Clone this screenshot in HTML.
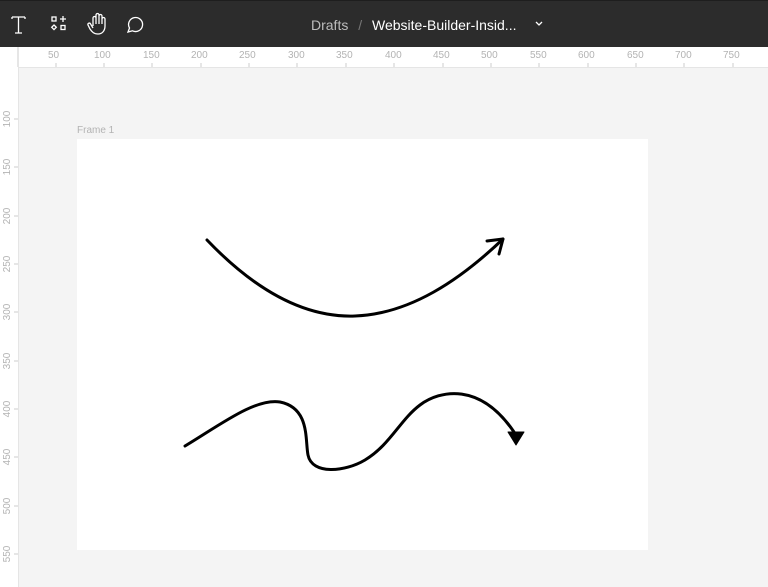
<!DOCTYPE html><html><head><style>
body{margin:0;width:768px;height:587px;overflow:hidden;background:#f4f4f4;font-family:"Liberation Sans",sans-serif;position:relative}
.top{position:absolute;left:0;top:0;width:768px;height:47px;background:#2c2c2c;border-top:1px solid #1e1e1e;box-sizing:border-box}
.title{position:absolute;top:16px;left:311px;font-size:14px;color:#fff;white-space:nowrap}
.rul{position:absolute;left:0;top:47px;width:768px;height:20px;background:#fff;border-bottom:1px solid #e5e5e5}
.lr{position:absolute;left:0;top:67px;width:18px;height:520px;background:#fff;border-right:1px solid #e5e5e5}
.t{position:absolute;font-size:10px;color:#b3b3b3}
.frame{position:absolute;left:77px;top:139px;width:571px;height:411px;background:#fff}
</style></head><body>
<div class="top">
<svg width="768" height="47" style="position:absolute;left:0;top:-1px" fill="none" stroke="#fff" stroke-width="1.3">
<path d="M12 17h13M18.5 17v16M15 33h7M12 17v2M25 17v2"/>
<rect x="52" y="17" width="4" height="4"/><path d="M63 16v6M60 19h6"/>
<path d="M54 25l2.3 2.3L54 29.6l-2.3-2.3z"/><rect x="61" y="25.5" width="4" height="4"/>
<path d="M93 26v-8a1.5 1.5 0 013 0v6M96 24v-9a1.5 1.5 0 013 0v9M99 24v-8a1.5 1.5 0 013 0v8M102 24v-5a1.5 1.5 0 013 0v7c0 5-3 8-7 8s-6-2-8-5l-2-4a1.4 1.4 0 012.3-1.5L93 28"/>
<path d="M128 32l1.5-4a7 7 0 113 2.8z"/>
<path d="M536 22l3 3 3-3"/>
</svg>
<div class="title"><span style="color:#bdbdbd">Drafts</span> <span style="color:#777;margin:0 6px">/</span> Website-Builder-Insid...</div>
</div>
<div class="rul">
<span class="t" style="left:48px;top:3px">50</span><span class="t" style="left:94px;top:3px">100</span><span class="t" style="left:143px;top:3px">150</span><span class="t" style="left:191px;top:3px">200</span><span class="t" style="left:239px;top:3px">250</span><span class="t" style="left:288px;top:3px">300</span><span class="t" style="left:336px;top:3px">350</span><span class="t" style="left:385px;top:3px">400</span><span class="t" style="left:433px;top:3px">450</span><span class="t" style="left:481px;top:3px">500</span><span class="t" style="left:530px;top:3px">550</span><span class="t" style="left:578px;top:3px">600</span><span class="t" style="left:627px;top:3px">650</span><span class="t" style="left:675px;top:3px">700</span><span class="t" style="left:723px;top:3px">750</span>
<svg width="768" height="20" style="position:absolute;left:0;top:0" stroke="#ccc"><path d="M56 16v4M104 16v4M152 16v4M201 16v4M249 16v4M297 16v4M346 16v4M394 16v4M443 16v4M491 16v4M539 16v4M588 16v4M636 16v4M684 16v4M733 16v4M18 0v20"/></svg>
</div>
<div class="lr">
<svg width="18" height="520" style="position:absolute;left:0;top:0"><g fill="#b3b3b3" font-size="10" font-family="Liberation Sans" text-anchor="middle">
<text transform="translate(10,52) rotate(-90)">100</text><text transform="translate(10,100) rotate(-90)">150</text><text transform="translate(10,149) rotate(-90)">200</text><text transform="translate(10,197) rotate(-90)">250</text><text transform="translate(10,245) rotate(-90)">300</text><text transform="translate(10,294) rotate(-90)">350</text><text transform="translate(10,342) rotate(-90)">400</text><text transform="translate(10,390) rotate(-90)">450</text><text transform="translate(10,439) rotate(-90)">500</text><text transform="translate(10,487) rotate(-90)">550</text></g>
<g stroke="#ccc"><path d="M14 52h4M14 100h4M14 149h4M14 197h4M14 245h4M14 294h4M14 342h4M14 390h4M14 439h4M14 487h4"/></g></svg>
</div>
<div class="t" style="left:77px;top:125px;font-size:10px">Frame 1</div>
<div class="frame"></div>
<svg width="768" height="587" style="position:absolute;left:0;top:0" fill="none" stroke="#000" stroke-width="3" stroke-linecap="round" stroke-linejoin="round">
<path d="M207 240C250 285 300 318 355 316C410 314 460 280 503 239"/>
<path d="M487 241L503 239L499 254" />
<path d="M185 446C220 425 255 398 280 402C310 408 305 440 308 455C312 475 345 472 365 460C390 445 400 420 420 405C440 390 480 382 514 432"/>
<path d="M508 432L524 432L516 445Z" fill="#000" stroke-width="1"/>
</svg>
</body></html>
